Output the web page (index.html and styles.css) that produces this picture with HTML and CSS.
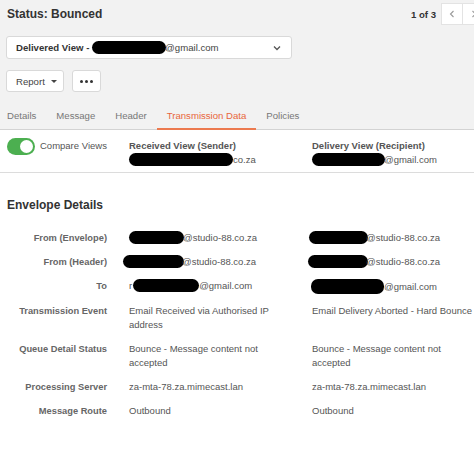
FILE: index.html
```html
<!DOCTYPE html>
<html>
<head>
<meta charset="utf-8">
<link rel="stylesheet" href="styles.css">
</head>
<body>
<div class="page">
  <div class="top">
    <div class="titlebar">
      <h1 class="title">Status: Bounced</h1>
      <div class="pager">
        <span class="pager-count">1 of 3</span>
        <span class="pager-btn"><svg width="6" height="8" viewBox="0 0 6 8"><path d="M4.5 1 L1.5 4 L4.5 7" fill="none" stroke="#999" stroke-width="1.1"/></svg></span>
        <span class="pager-btn"><svg width="6" height="8" viewBox="0 0 6 8"><path d="M1.5 1 L4.5 4 L1.5 7" fill="none" stroke="#999" stroke-width="1.1"/></svg></span>
      </div>
    </div>
    <div class="select">
      <span class="select-text"><b class="select-label">Delivered View -</b> <span class="redact r-sel"></span>@gmail.com</span>
      <svg class="chev" width="8" height="6" viewBox="0 0 8 6"><path d="M1 1.5 L4 4.5 L7 1.5" fill="none" stroke="#555" stroke-width="1.3"/></svg>
    </div>
    <div class="actions">
      <button class="btn btn-report">Report <span class="caret"></span></button>
      <button class="btn btn-more"><span class="dot"></span><span class="dot"></span><span class="dot"></span></button>
    </div>
    <nav class="tabs">
      <span class="tab">Details</span>
      <span class="tab">Message</span>
      <span class="tab">Header</span>
      <span class="tab active">Transmission Data</span>
      <span class="tab">Policies</span>
    </nav>
  </div>

  <div class="compare grid">
    <div class="toggle-wrap">
      <span class="toggle"><span class="knob"></span></span>
      <span class="toggle-label">Compare Views</span>
    </div>
    <div class="col-head">
      <div class="col-title">Received View (Sender)</div>
      <div><span class="redact r-sender"></span>co.za</div>
    </div>
    <div class="col-head">
      <div class="col-title">Delivery View (Recipient)</div>
      <div><span class="redact r-recip"></span>@gmail.com</div>
    </div>
  </div>

  <h2 class="section-title">Envelope Details</h2>

  <div class="details grid">
    <div class="label">From (Envelope)</div>
    <div class="value"><span class="redact r-fe1"></span>@studio-88.co.za</div>
    <div class="value"><span class="redact r-fe2"></span>@studio-88.co.za</div>

    <div class="label">From (Header)</div>
    <div class="value"><span class="redact r-fh1"></span>@studio-88.co.za</div>
    <div class="value"><span class="redact r-fh2"></span>@studio-88.co.za</div>

    <div class="label">To</div>
    <div class="value">r<span class="redact r-to1"></span>@gmail.com</div>
    <div class="value"><span class="redact r-to2"></span>@gmail.com</div>

    <div class="label">Transmission Event</div>
    <div class="value">Email Received via Authorised IP address</div>
    <div class="value">Email Delivery Aborted - Hard Bounce</div>

    <div class="label">Queue Detail Status</div>
    <div class="value">Bounce - Message content not accepted</div>
    <div class="value">Bounce - Message content not accepted</div>

    <div class="label">Processing Server</div>
    <div class="value">za-mta-78.za.mimecast.lan</div>
    <div class="value">za-mta-78.za.mimecast.lan</div>

    <div class="label">Message Route</div>
    <div class="value">Outbound</div>
    <div class="value">Outbound</div>
  </div>
</div>
</body>
</html>
```
FILE: styles.css
```css
html, body {
  margin: 0;
  padding: 0;
  overflow: hidden;
}
body {
  font-family: "Liberation Sans", Arial, sans-serif;
  color: #555;
  background: #fff;
}
.page {
  width: 490px;
}
.top {
  background: #f2f2f2;
  padding: 3px 5px 0 0;
}
.titlebar {
  display: flex;
  align-items: center;
  justify-content: space-between;
  height: 22px;
  padding-left: 7px;
}
.title {
  margin: 0;
  font-size: 12px;
  font-weight: bold;
  color: #333;
}
.pager {
  display: flex;
  align-items: center;
}
.pager-count {
  font-size: 9.6px;
  font-weight: bold;
  color: #333;
  margin-right: 5px;
}
.pager-btn {
  width: 22px;
  height: 22px;
  box-sizing: border-box;
  background: #fff;
  border: 1px solid #e3e3e3;
  display: flex;
  align-items: center;
  justify-content: center;
}
.pager-btn + .pager-btn {
  border-left: none;
}
.select {
  margin: 11px 0 0 6px;
  width: 286px;
  height: 23px;
  box-sizing: border-box;
  background: #fff;
  border: 1px solid #d9d9d9;
  border-radius: 3px;
  display: flex;
  align-items: center;
  justify-content: space-between;
  padding: 0 10px 0 9px;
  font-size: 9.6px;
  color: #444;
}
.select-label {
  color: #333;
}
.actions {
  display: flex;
  gap: 8px;
  margin-top: 11px;
  padding-left: 6px;
}
.btn {
  height: 22px;
  box-sizing: border-box;
  background: #fff;
  border: 1px solid #d9d9d9;
  border-radius: 3px;
  font-family: inherit;
  font-size: 9.6px;
  color: #444;
  padding: 0;
  display: flex;
  align-items: center;
}
.btn-report {
  width: 58px;
  padding-left: 9px;
}
.caret {
  display: inline-block;
  width: 0;
  height: 0;
  border-left: 3px solid transparent;
  border-right: 3px solid transparent;
  border-top: 3px solid #444;
  margin-left: 6px;
}
.btn-more {
  width: 29px;
  justify-content: center;
  gap: 2px;
}
.dot {
  width: 3px;
  height: 3px;
  border-radius: 50%;
  background: #333;
}
.tabs {
  display: flex;
  margin-top: 11px;
  padding-left: 7px;
  border-bottom: 1px solid #d3d3d3;
  margin-right: -5px;
}
.tab {
  font-size: 9.6px;
  line-height: 11px;
  color: #777;
  padding: 7px 10px 7px;
  border-bottom: 2px solid transparent;
  margin-bottom: -1px;
}
.tab:first-child {
  padding-left: 0;
}
.tab.active {
  color: #e8663c;
  border-bottom-color: #ec7a4f;
}
.grid {
  display: grid;
  grid-template-columns: 100px 161px 165px;
  column-gap: 22px;
  padding-left: 7px;
  font-size: 9.5px;
  line-height: 14px;
}
.compare {
  padding-top: 9px;
  padding-bottom: 5px;
  border-bottom: 1px solid #dcdcdc;
}
.toggle-wrap {
  display: flex;
  align-items: flex-start;
  gap: 5px;
}
.toggle {
  width: 28px;
  height: 17px;
  box-sizing: border-box;
  border-radius: 9px;
  background: #4caf50;
  display: flex;
  justify-content: flex-end;
  align-items: center;
  padding: 2px;
  margin-top: -1px;
}
.knob {
  width: 13px;
  height: 13px;
  border-radius: 50%;
  background: #fff;
}
.toggle-label {
  color: #555;
}
.col-title {
  font-weight: bold;
  color: #555;
}
.redact {
  display: inline-block;
  height: 13px;
  background: #000;
  border-radius: 7px;
  vertical-align: -3px;
}
.r-sel { width: 74px; margin-right: -1px; }
.r-sender { width: 104px; }
.r-recip { width: 73px; margin-right: -1px; }
.r-fe1 { width: 55px; margin-right: -1px; }
.r-fe2 { width: 59px; margin-left: -3px; margin-right: -2px; }
.r-fh1 { width: 61px; margin-left: -6px; margin-right: -2px; }
.r-fh2 { width: 60px; margin-left: -4px; margin-right: -2px; }
.r-to1 { width: 66px; margin-left: 1px; }
.r-to2 { width: 73px; margin-left: -1px; height: 15px; vertical-align: -4px; }
.section-title {
  margin: 25px 0 19px 7px;
  font-size: 12px;
  line-height: 14px;
  font-weight: bold;
  color: #333;
}
.details {
  row-gap: 10px;
}
.label {
  text-align: right;
  font-weight: bold;
  color: #666;
  font-size: 9.3px;
}
.value {
  color: #555;
}
```
